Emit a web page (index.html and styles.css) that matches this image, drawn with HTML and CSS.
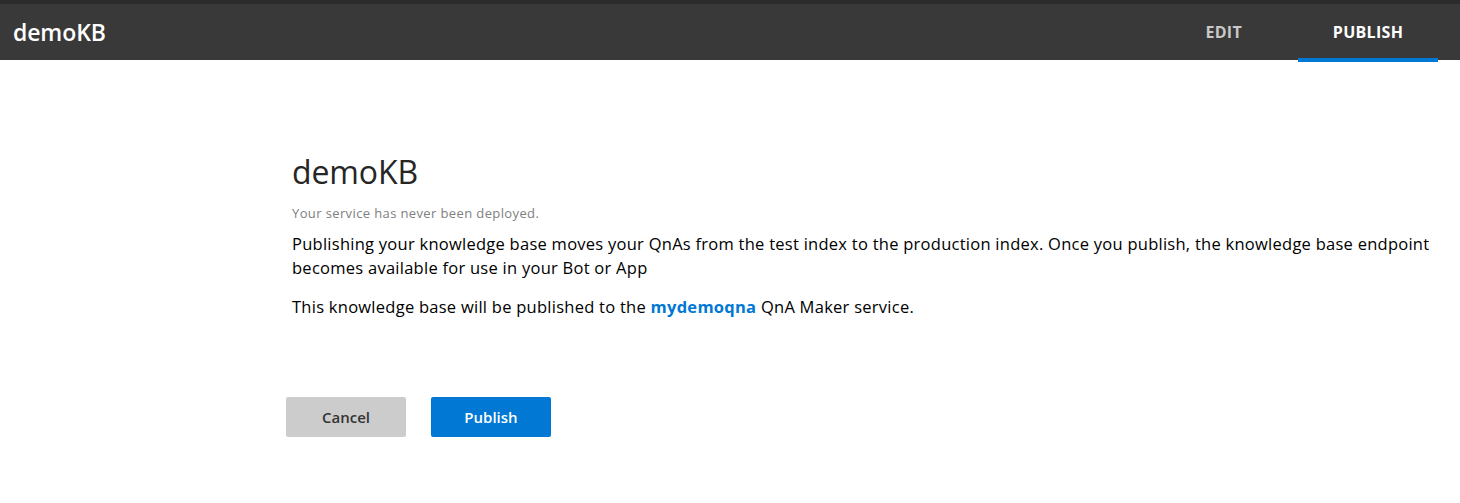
FILE: index.html
```html
<!DOCTYPE html>
<html>
<head>
<meta charset="utf-8">
<link rel="stylesheet" href="styles.css">
</head>
<body>
<header class="topbar">
  <div class="brand">demoKB</div>
  <nav class="tabs">
    <a class="tab">EDIT</a>
    <a class="tab active">PUBLISH</a>
  </nav>
</header>
<main class="content">
  <h1 class="title">demoKB</h1>
  <p class="status">Your service has never been deployed.</p>
  <p class="desc">Publishing your knowledge base moves your QnAs from the test index to the production index. Once you publish, the knowledge base endpoint becomes available for use in your Bot or App</p>
  <p class="desc target">This knowledge base will be published to the <a class="svc">mydemoqna</a> QnA Maker service.</p>
  <div class="actions">
    <button class="btn cancel">Cancel</button>
    <button class="btn primary">Publish</button>
  </div>
</main>
</body>
</html>
```

FILE: styles.css
```css
html, body {
  margin: 0;
  padding: 0;
  background: #fff;
  font-family: "Open Sans", "Noto Sans", sans-serif;
  color: #000;
}
.topbar {
  height: 56px;
  background: #393939;
  border-top: 4px solid #2b2b2b;
  display: flex;
  align-items: center;
  justify-content: space-between;
}
.brand {
  color: #fff;
  font-size: 23px;
  font-weight: 600;
  padding-left: 13px;
  letter-spacing: -0.1px;
}
.tabs {
  display: flex;
  gap: 21px;
  height: 100%;
  padding-right: 22px;
}
.tab {
  position: relative;
  display: flex;
  align-items: center;
  justify-content: center;
  padding: 0 35px;
  color: #c8c8c8;
  font-size: 16px;
  font-weight: 700;
  letter-spacing: 0.3px;
  height: 100%;
}
.tab.active {
  color: #fff;
  width: 140px;
  padding: 0;
}
.tab.active::after {
  content: "";
  position: absolute;
  left: 0;
  right: 0;
  bottom: -2px;
  height: 4px;
  background: #0078d4;
}
.content {
  padding: 90px 0 0 292px;
}
.title {
  margin: 0;
  font-size: 32px;
  font-weight: 400;
  color: #262626;
  line-height: 44px;
  letter-spacing: -0.1px;
}
.status {
  margin: 10px 0 0;
  font-size: 13px;
  letter-spacing: 0.38px;
  color: #808080;
  line-height: 18px;
}
.desc {
  margin: 10px 0 0;
  font-size: 16.5px;
  letter-spacing: 0.26px;
  line-height: 24px;
  color: #000;
  padding-right: 20px;
}
.target { margin-top: 15px; }
.svc {
  color: #0078d4;
  font-weight: 700;
}
.actions {
  display: flex;
  gap: 25px;
  margin: 78px 0 0 -6px;
}
.btn {
  width: 120px;
  height: 40px;
  border: none;
  border-radius: 2px;
  font-family: inherit;
  font-size: 15px;
  font-weight: 600;
}
.cancel { background: #cccccc; color: #333; }
.primary { background: #0078d4; color: #fff; }
```
